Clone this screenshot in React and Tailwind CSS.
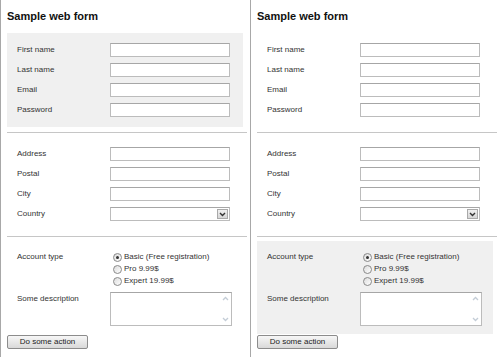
import React from "react";

function Row({ label, children }) {
  return (
    <div className="flex items-center h-[14px]">
      <div className="w-[93px] text-[8px] leading-[14px] text-[#333]">{label}</div>
      {children}
    </div>
  );
}

function TextInput() {
  return (
    <input
      type="text"
      className="w-[120px] h-[14px] border border-[#bcbcbc] border-t-[#a6a6a6] bg-white outline-none"
    />
  );
}

function SelectBox() {
  return (
    <div className="w-[120px] h-[14px] border border-[#bcbcbc] border-t-[#a6a6a6] bg-white flex justify-end p-px">
      <div className="w-[11px] h-full border border-[#a9a9a9] bg-linear-to-b from-[#f0f0f0] to-[#d6d6d6] flex items-center justify-center">
        <svg width="7" height="5" viewBox="0 0 7 5">
          <path d="M1 1 L3.5 3.5 L6 1" fill="none" stroke="#333" strokeWidth="1.4" />
        </svg>
      </div>
    </div>
  );
}

function Radio({ checked, label }) {
  return (
    <div className="flex items-center h-[12px] pl-[3px]">
      <span className="w-[9px] h-[9px] rounded-full border border-[#8a8a8a] bg-linear-to-br from-[#dcdcdc] to-white flex items-center justify-center">
        {checked && <span className="w-[3px] h-[3px] rounded-full bg-[#333]" />}
      </span>
      <span className="ml-[2px] text-[8px] leading-[12px] text-[#333]">{label}</span>
    </div>
  );
}

function TextArea() {
  return (
    <div className="w-[122px] h-[34px] border border-[#bcbcbc] border-t-[#a6a6a6] bg-white flex">
      <textarea className="flex-1 resize-none outline-none bg-white" />
      <div className="w-[12px] flex flex-col justify-between items-center py-[3px]">
        <svg width="7" height="5" viewBox="0 0 7 5">
          <path d="M1 4 L3.5 1.5 L6 4" fill="none" stroke="#c3ccd6" strokeWidth="1.3" />
        </svg>
        <svg width="7" height="5" viewBox="0 0 7 5">
          <path d="M1 1 L3.5 3.5 L6 1" fill="none" stroke="#c3ccd6" strokeWidth="1.3" />
        </svg>
      </div>
    </div>
  );
}

function Panel({ shade }) {
  const s1 = shade === "top" ? "bg-[#f0f0f0]" : "";
  const s3 = shade === "bottom" ? "bg-[#f0f0f0]" : "";
  return (
    <div className="w-[250px] h-[357px] border-l border-[#a8a8a8] pl-[6px] pr-[7px] font-['Liberation_Sans',Arial,sans-serif]">
      <div className="h-[33px] flex items-center pb-[1px] text-[11px] font-bold text-[#111]">
        Sample web form
      </div>
      <div className={`pt-[10px] pb-[10px] pl-[10px] flex flex-col gap-[6px] ${s1}`}>
        <Row label="First name"><TextInput /></Row>
        <Row label="Last name"><TextInput /></Row>
        <Row label="Email"><TextInput /></Row>
        <Row label="Password"><TextInput /></Row>
      </div>
      <div className="mt-[5px] mb-[4px] h-px w-[240px] bg-[#c6c6c6]" />
      <div className="pt-[10px] pb-[10px] pl-[10px] flex flex-col gap-[6px]">
        <Row label="Address"><TextInput /></Row>
        <Row label="Postal"><TextInput /></Row>
        <Row label="City"><TextInput /></Row>
        <Row label="Country"><SelectBox /></Row>
      </div>
      <div className="mt-[5px] mb-[4px] h-px w-[240px] bg-[#c6c6c6]" />
      <div className={`pt-[10px] pb-[8px] pl-[10px] ${s3}`}>
        <div className="flex">
          <div className="w-[93px] text-[8px] leading-[12px] text-[#333]">Account type</div>
          <div className="flex flex-col">
            <Radio checked label="Basic (Free registration)" />
            <Radio label="Pro 9.99$" />
            <Radio label="Expert 19.99$" />
          </div>
        </div>
        <div className="flex mt-[5px]">
          <div className="w-[93px] text-[8px] leading-[14px] text-[#333]">Some description</div>
          <TextArea />
        </div>
      </div>
      <button className="mt-px w-[81px] h-[14px] border border-[#8c8c8c] rounded-[2px] bg-linear-to-b from-[#f7f7f7] to-[#d9d9d9] text-[8px] leading-[12px] text-[#222] flex items-center justify-center">
        Do some action
      </button>
    </div>
  );
}

export default function App() {
  return (
    <div className="w-[500px] h-[357px] bg-white flex overflow-hidden">
      <Panel shade="top" />
      <Panel shade="bottom" />
    </div>
  );
}
